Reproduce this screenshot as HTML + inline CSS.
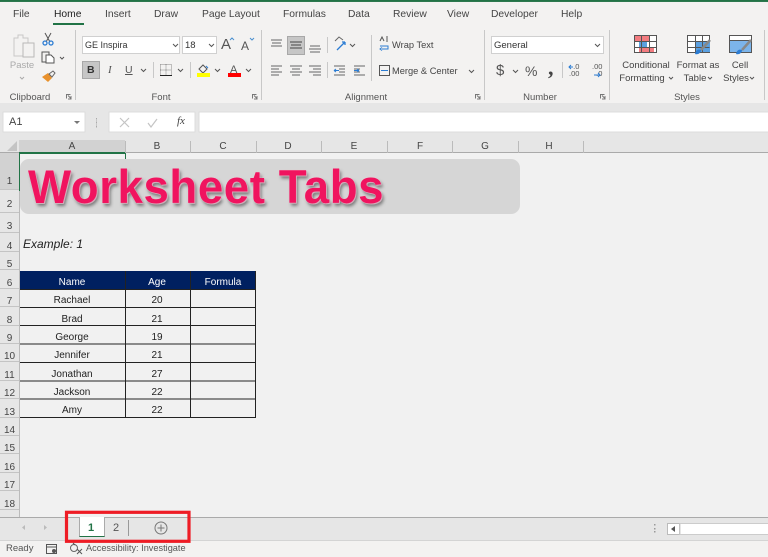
<!DOCTYPE html>
<html><head><meta charset="utf-8">
<style>
html,body{margin:0;padding:0}
body{width:768px;height:557px;overflow:hidden;position:relative;background:#f1f1f1;font-family:"Liberation Sans",sans-serif;color:#444;filter:blur(.3px)}
.t{position:absolute;white-space:nowrap;line-height:1}
.c{position:absolute;white-space:nowrap;line-height:1;transform:translateX(-50%)}
.b{position:absolute}
svg{position:absolute;left:0;top:0}
.tab{font-size:10.3px;color:#444;top:10px}
.lb{font-size:9.5px;color:#555;top:93px}
.rh{position:absolute;left:0;width:19px;background:#e6e6e6;border-bottom:1px solid #c4c4c4;box-sizing:border-box;font-size:10px;color:#444;text-align:center}
.rh span{position:absolute;left:0;right:0;bottom:-1px;line-height:1}
.ch{font-size:10px;color:#444;top:142px}
.cell{font-size:10px;color:#222}
</style></head><body>
<div class="b" style="left:0;top:0;width:768px;height:2px;background:#217346"></div>
<div class="b" style="left:0;top:2px;width:768px;height:101px;background:#f3f2f1;box-shadow:0 1px 2px #bbb"></div>
<div class="b" style="left:0;top:103px;width:768px;height:37px;background:#e6e6e6"></div>

<div class="t tab" style="left:13px">File</div>
<div class="t tab" style="left:54px;color:#222">Home</div>
<div class="b" style="left:53px;top:23px;width:31px;height:2px;background:#217346"></div>
<div class="t tab" style="left:105px">Insert</div>
<div class="t tab" style="left:154px">Draw</div>
<div class="t tab" style="left:202px">Page Layout</div>
<div class="t tab" style="left:283px">Formulas</div>
<div class="t tab" style="left:348px">Data</div>
<div class="t tab" style="left:393px">Review</div>
<div class="t tab" style="left:447px">View</div>
<div class="t tab" style="left:491px">Developer</div>
<div class="t tab" style="left:561px">Help</div>

<!-- ribbon boxes -->
<div class="b" style="left:82px;top:36px;width:98px;height:18px;background:#fff;border:1px solid #d0d0d0;box-sizing:border-box"></div>
<div class="t" style="left:85px;top:41px;font-size:9px;color:#333">GE Inspira</div>
<div class="b" style="left:182px;top:36px;width:35px;height:18px;background:#fff;border:1px solid #d0d0d0;box-sizing:border-box"></div>
<div class="t" style="left:185px;top:41px;font-size:9.500px;color:#333">18</div>
<div class="b" style="left:82px;top:61px;width:18px;height:18px;background:#c6c6c6;border:1px solid #a8a8a8;box-sizing:border-box"></div>
<div class="t" style="left:87px;top:65px;font-size:10.500px;font-weight:bold;color:#333">B</div>
<div class="t" style="left:108px;top:65px;font-size:11px;font-style:italic;font-family:'Liberation Serif',serif;color:#555">I</div>
<div class="t" style="left:125px;top:65px;font-size:10.500px;color:#555;text-decoration:underline">U</div>
<div class="t" style="left:221px;top:37px;font-size:15px;color:#555">A</div>
<div class="t" style="left:241px;top:40px;font-size:12px;color:#555">A</div>
<div class="t" style="left:230px;top:65px;font-size:11px;color:#555">A</div>
<div class="b" style="left:287px;top:36px;width:18px;height:19px;background:#c6c6c6;border:1px solid #a8a8a8;box-sizing:border-box"></div>
<div class="t" style="left:392px;top:41px;font-size:9.300px;color:#444">Wrap Text</div>
<div class="t" style="left:392px;top:67px;font-size:9.300px;color:#444">Merge &amp; Center</div>
<div class="b" style="left:491px;top:36px;width:113px;height:18px;background:#fff;border:1px solid #d0d0d0;box-sizing:border-box"></div>
<div class="t" style="left:494px;top:41px;font-size:9.500px;color:#333">General</div>
<div class="t" style="left:496px;top:63px;font-size:15px;color:#555">$</div>
<div class="t" style="left:525px;top:64px;font-size:14px;color:#555">%</div>
<div class="t" style="left:548px;top:57px;font-size:22px;font-weight:bold;color:#444;font-family:'Liberation Serif',serif">,</div>
<div class="t" style="left:569px;top:63px;font-size:7.500px;color:#555;line-height:7px">&nbsp;&nbsp;.0<br>.00</div>
<div class="t" style="left:592px;top:63px;font-size:7.500px;color:#555;line-height:7px">.00<br>&nbsp;&nbsp;.0</div>

<div class="c" style="left:22px;top:61px;font-size:9.500px;color:#aaa">Paste</div>
<div class="c" style="left:646px;top:61px;font-size:9.500px">Conditional</div>
<div class="c" style="left:642px;top:74px;font-size:9.500px">Formatting</div>
<div class="c" style="left:698px;top:61px;font-size:9.500px">Format as</div>
<div class="c" style="left:695px;top:74px;font-size:9.500px">Table</div>
<div class="c" style="left:740px;top:61px;font-size:9.500px">Cell</div>
<div class="c" style="left:736px;top:74px;font-size:9.500px">Styles</div>

<div class="c lb" style="left:30px">Clipboard</div>
<div class="c lb" style="left:161px">Font</div>
<div class="c lb" style="left:366px">Alignment</div>
<div class="c lb" style="left:540px">Number</div>
<div class="c lb" style="left:687px">Styles</div>

<svg width="768" height="140" fill="none">
 <!-- separators -->
 <g stroke="#c8c8c8"><path d="M75.500 30V100M261.500 30V100M484.500 30V100M609.500 30V100M764.500 30V100M371.500 35V81M327.500 37V53M327.500 62V78M153.500 62V78M190.500 62V78M562.500 62V78M96.500 118V128"/></g>
 <!-- paste -->
 <path d="M14 38h4v-3h5v3h5v18H14z" stroke="#c8c8c8" fill="#f3f2f1"/>
 <rect x="23" y="43" width="11" height="14" stroke="#b8b8b8" fill="#f3f2f1"/>
 <path d="M20 77l2 2 2-2" stroke="#aaa"/>
 <!-- cut -->
 <path d="M45 33l5 9M51 33l-5 9" stroke="#555"/><circle cx="45" cy="43" r="2" stroke="#2b7cd3" stroke-width="1.300"/><circle cx="51" cy="43" r="2" stroke="#2b7cd3" stroke-width="1.300"/>
 <!-- copy -->
 <rect x="42" y="52" width="7" height="10" stroke="#555" fill="#f3f2f1"/><path d="M46 55h5l3 3v5h-8z" stroke="#555" fill="#fff"/><path d="M60 57l2 2 2-2" stroke="#555"/>
 <!-- painter -->
 <path d="M42 77l6-4 4 5-4 4z" fill="#e8912d"/><path d="M49 74l4-3 2 2-3 4z" stroke="#666"/>
 <!-- dropdown arrows -->
 <g stroke="#555"><path d="M173 44l2.500 2.500 2.500-2.500M209 44l2.500 2.500 2.500-2.500M141 69l2.500 2.500 2.500-2.500M178 69l2.500 2.500 2.500-2.500M215 69l2.500 2.500 2.500-2.500M246 69l2.500 2.500 2.500-2.500M350 44l2.500 2.500 2.500-2.500M469 70l2.500 2.500 2.500-2.500M513 70l2.500 2.500 2.500-2.500M595 44l2.500 2.500 2.500-2.500M669 77l2 2 2-2M708 77l2 2 2-2M750 77l2 2 2-2"/></g>
 <path d="M230 40l2-2 2 2M250 38l2 2 2-2" stroke="#4a90d0"/>
 <!-- borders icon -->
 <path d="M160.500 64.500h11v11M160.500 64.500v11M166 64.500v11M160.500 70h11" stroke="#888" stroke-dasharray="1 1"/><path d="M160 75.500h12" stroke="#222"/>
 <!-- fill -->
 <path d="M199 69l4-4 4 4-4 4z" stroke="#555"/><path d="M206 66l2 2" stroke="#2b7cd3"/><rect x="197" y="73" width="13" height="4" fill="#ff0"/>
 <!-- font colour -->
 <rect x="228" y="73" width="13" height="4" fill="#f00"/>
 <!-- align -->
 <g stroke="#666"><path d="M271 40h11M272 43h9M271 46h11"/><path d="M290 42h12M291 45h10M290 48h12" stroke="#444"/><path d="M310 46h10M309 49h12M310 52h10"/>
 <path d="M271 66h11M271 69h8M271 72h11M271 75h8M290 66h12M292 69h8M290 72h12M292 75h8M309 66h12M313 69h8M309 72h12M313 75h8"/>
 <path d="M334 66h11M339 69h6M339 72h6M334 75h11M354 66h11M354 69h6M354 72h6M354 75h11"/></g>
 <path d="M339 70.500h-5M334 70.500l2-1.500M334 70.500l2 1.500" stroke="#2b7cd3"/><path d="M354 70.500h5M359 70.500l-2-1.500M359 70.500l-2 1.500" stroke="#2b7cd3"/>
 <path d="M337 50l8-8M345 42h-3M345 42v3" stroke="#2b7cd3" stroke-width="1.300"/><path d="M335 41l4-4 4 3" stroke="#666"/>
 <!-- wrap -->
 <path d="M380 41l2-4 2 4M387 36v6" stroke="#555"/><path d="M380 46h8v3h-6M382 47.500l-2 1.500 2 1.500" stroke="#2b7cd3"/>
 <rect x="379.500" y="65.500" width="10" height="10" stroke="#555"/><path d="M381 70.500h7" stroke="#2b7cd3"/>
 <path d="M571 65l-2 2 2 2M569 67h4" stroke="#2b7cd3"/><path d="M598 73l2 2-2 2M594 75h6" stroke="#2b7cd3"/>
 <!-- cond -->
 <rect x="634.500" y="35.500" width="22" height="17" stroke="#555" fill="#fff"/>
 <rect x="635" y="36" width="14" height="5" fill="#f37c80"/><rect x="639" y="47" width="15" height="5" fill="#f37c80"/><rect x="639" y="41" width="8" height="6" fill="#5ba0e0"/>
 <path d="M634.500 41.500h22M634.500 47.500h22M641.500 35.500v17M649.500 35.500v17" stroke="#555"/>
 <!-- format table -->
 <rect x="687.500" y="35.500" width="22" height="17" stroke="#555" fill="#fff"/>
 <rect x="695" y="41" width="15" height="11" fill="#5ba0e0"/>
 <path d="M687.500 41.500h22M687.500 47.500h22M695.500 35.500v17M702.500 35.500v17" stroke="#555"/>
 <path d="M701 50l9-10" stroke="#888" stroke-width="2.500"/><path d="M695 54c1-4 3-5 6-4 0 3-3 5-6 4z" fill="#2b7cd3"/>
 <!-- cell styles -->
 <rect x="729.500" y="35.500" width="22" height="17" stroke="#555" fill="#fff"/>
 <rect x="730" y="40" width="21" height="12" fill="#7cb4ea"/>
 <path d="M729.500 40.500h22" stroke="#555"/>
 <path d="M742 50l9-10" stroke="#888" stroke-width="2.500"/><path d="M736 54c1-4 3-5 6-4 0 3-3 5-6 4z" fill="#2b7cd3"/>
 <!-- launchers -->
 <g stroke="#777"><path d="M66.500 98.500v-4h4M68 95.500l3 3M71 96v3h-3M252.500 98.500v-4h4M254 95.500l3 3M257 96v3h-3M475.500 98.500v-4h4M477 95.500l3 3M480 96v3h-3M600.500 98.500v-4h4M602 95.500l3 3M605 96v3h-3"/></g>
 <!-- formula bar -->
 <rect x="3" y="112" width="82" height="20" fill="#fff" stroke="#dcdcdc"/>
 <path d="M74 121h6l-3 3z" fill="#777"/>
 <g fill="#aaa"><rect x="96" y="118" width="1" height="1"/><rect x="96" y="122" width="1" height="1"/><rect x="96" y="126" width="1" height="1"/></g>
 <rect x="109" y="112" width="86" height="20" fill="#fff" stroke="#dcdcdc"/>
 <rect x="199" y="112" width="570" height="20" fill="#fff" stroke="#dcdcdc"/>
 <path d="M120 118l9 9M129 118l-9 9" stroke="#c4c4c4" stroke-width="1.200"/>
 <path d="M148 123l3 4 6-8" stroke="#c4c4c4" stroke-width="1.200"/>
</svg>
<div class="t" style="left:9px;top:117px;font-size:11px;color:#444">A1</div>
<div class="t" style="left:177px;top:116px;font-size:11px;font-style:italic;font-family:'Liberation Serif',serif;color:#444">fx</div>

<!-- headers -->
<div class="b" style="left:0;top:140px;width:768px;height:13px;background:#e6e6e6;border-bottom:1px solid #aaa;box-sizing:border-box"></div>
<div class="b" style="left:19px;top:140px;width:106px;height:13px;background:#d2d2d2;border-bottom:1px solid #217346;box-sizing:border-box"></div>
<svg width="768" height="153"><path d="M17 141v10H7z" fill="#c4c4c4"/><path d="M190.500 141v12M256.500 141v12M321.500 141v12M387.500 141v12M452.500 141v12M518.500 141v12M583.500 141v12M125.500 141v12" stroke="#bbb"/></svg>
<div class="c ch" style="left:72px">A</div><div class="c ch" style="left:157px">B</div><div class="c ch" style="left:223px">C</div><div class="c ch" style="left:288px">D</div><div class="c ch" style="left:354px">E</div><div class="c ch" style="left:420px">F</div><div class="c ch" style="left:485px">G</div><div class="c ch" style="left:549px">H</div>

<!-- row headers -->
<div class="rh" style="top:153px;height:37px;background:#d2d2d2"><span style="bottom:2px">1</span></div>
<div class="rh" style="top:190px;height:23px"><span style="bottom:2px">2</span></div>
<div class="rh" style="top:213px;height:20px"><span style="bottom:0">3</span></div>
<div class="rh" style="top:233px;height:19px"><span>4</span></div>
<div class="rh" style="top:252px;height:18px"><span>5</span></div>
<div class="rh" style="top:270px;height:19px"><span>6</span></div>
<div class="rh" style="top:289px;height:18px"><span>7</span></div>
<div class="rh" style="top:307px;height:19px"><span>8</span></div>
<div class="rh" style="top:326px;height:18px"><span>9</span></div>
<div class="rh" style="top:344px;height:18px"><span>10</span></div>
<div class="rh" style="top:362px;height:19px"><span>11</span></div>
<div class="rh" style="top:381px;height:18px"><span>12</span></div>
<div class="rh" style="top:399px;height:19px"><span>13</span></div>
<div class="rh" style="top:418px;height:18px"><span>14</span></div>
<div class="rh" style="top:436px;height:18px"><span>15</span></div>
<div class="rh" style="top:454px;height:19px"><span>16</span></div>
<div class="rh" style="top:473px;height:18px"><span>17</span></div>
<div class="rh" style="top:491px;height:19px"><span>18</span></div>
<div class="b" style="left:0;top:510px;width:19px;height:7px;background:#e6e6e6"></div>
<div class="b" style="left:19px;top:153px;width:1px;height:364px;background:#bbb"></div>

<!-- A1 selection -->
<div class="b" style="left:19px;top:153px;width:107px;height:38px;border:1px solid #217346;box-sizing:border-box"></div>

<!-- title banner -->
<div class="b" style="left:20px;top:159px;width:500px;height:55px;background:#d6d6d6;border-radius:9px"></div>
<div class="t" style="left:28px;top:163px;font-size:47px;font-weight:bold;color:#f0145f;letter-spacing:.6px;font-family:'Liberation Sans',sans-serif;text-shadow:0 0 1px #f8c8d8,1px 1px 0 #c9a9b4,2px 3px 3px #777;transform-origin:left top;transform:scaleX(.97)">Worksheet Tabs</div>

<div class="t" style="left:23px;top:238px;font-size:12px;font-style:italic;color:#222">Example: 1</div>

<!-- table -->
<svg width="768" height="420">
 <rect x="20" y="271" width="236" height="18" fill="#002060"/>
 <path d="M20 289.500H256M20 307.500H256M20 325.500H256M20 344H256M20 362.500H256M20 381H256M20 399H256M20 417.500H256" stroke="#222"/>
 <path d="M125.500 271V418M190.500 271V418M255.500 271V418" stroke="#222"/>
</svg>
<div class="c cell" style="left:72px;top:278px;color:#fff">Name</div><div class="c cell" style="left:157px;top:278px;color:#fff">Age</div><div class="c cell" style="left:223px;top:278px;color:#fff">Formula</div>
<div class="c cell" style="left:72px;top:296px">Rachael</div><div class="c cell" style="left:157px;top:296px">20</div>
<div class="c cell" style="left:72px;top:315px">Brad</div><div class="c cell" style="left:157px;top:315px">21</div>
<div class="c cell" style="left:72px;top:333px">George</div><div class="c cell" style="left:157px;top:333px">19</div>
<div class="c cell" style="left:72px;top:351px">Jennifer</div><div class="c cell" style="left:157px;top:351px">21</div>
<div class="c cell" style="left:72px;top:370px">Jonathan</div><div class="c cell" style="left:157px;top:370px">27</div>
<div class="c cell" style="left:72px;top:388px">Jackson</div><div class="c cell" style="left:157px;top:388px">22</div>
<div class="c cell" style="left:72px;top:406px">Amy</div><div class="c cell" style="left:157px;top:406px">22</div>

<!-- tab bar -->
<div class="b" style="left:0;top:517px;width:768px;height:23px;background:#e6e6e6;border-top:1px solid #aaa;box-sizing:border-box"></div>
<div class="b" style="left:0;top:540px;width:768px;height:17px;background:#f3f2f1;border-top:1px solid #d4d4d4;box-sizing:border-box"></div>
<div class="b" style="left:79px;top:517px;width:26px;height:20px;background:#fff;border-left:1px solid #aaa;border-right:1px solid #aaa;border-bottom:1px solid #217346;box-sizing:border-box"></div>
<div class="c" style="left:91px;top:523px;font-size:11px;font-weight:bold;color:#217346">1</div>
<div class="c" style="left:116px;top:523px;font-size:11px;color:#555">2</div>
<div class="t" style="left:6px;top:544px;font-size:9.500px;color:#555">Ready</div>
<div class="t" style="left:86px;top:544px;font-size:9.200px;color:#555">Accessibility: Investigate</div>
<svg width="768" height="557">
 <path d="M25 525v5l-3-2.500zM44 525v5l3-2.500z" fill="#bbb"/>
 <path d="M128.500 520v16" stroke="#999"/>
 <circle cx="161" cy="528" r="6" stroke="#777" fill="none"/><path d="M157.500 528h7M161 524.500v7" stroke="#777"/>
 <rect x="66.500" y="512.300" width="122.500" height="29" fill="none" stroke="#ee1c25" stroke-width="3.200"/>
 <g fill="#999"><rect x="654" y="524" width="1.500" height="1.500"/><rect x="654" y="528" width="1.500" height="1.500"/><rect x="654" y="531" width="1.500" height="1.500"/></g>
 <rect x="667.500" y="523.500" width="12" height="11" fill="#fff" stroke="#bbb"/><path d="M675 526v6l-4-3z" fill="#555"/>
 <rect x="680" y="523.500" width="90" height="11" fill="#fff" stroke="#ccc"/>
 <path d="M46.500 544.500h10v9h-10zM46.500 547h10" stroke="#555" fill="none"/><circle cx="54" cy="551" r="2" fill="#555"/>
 <circle cx="74" cy="548" r="3.500" stroke="#666" fill="none"/><path d="M73 543l2 2M77 549l5 5M82 549l-5 5" stroke="#555" fill="none"/>
</svg>
</body></html>
